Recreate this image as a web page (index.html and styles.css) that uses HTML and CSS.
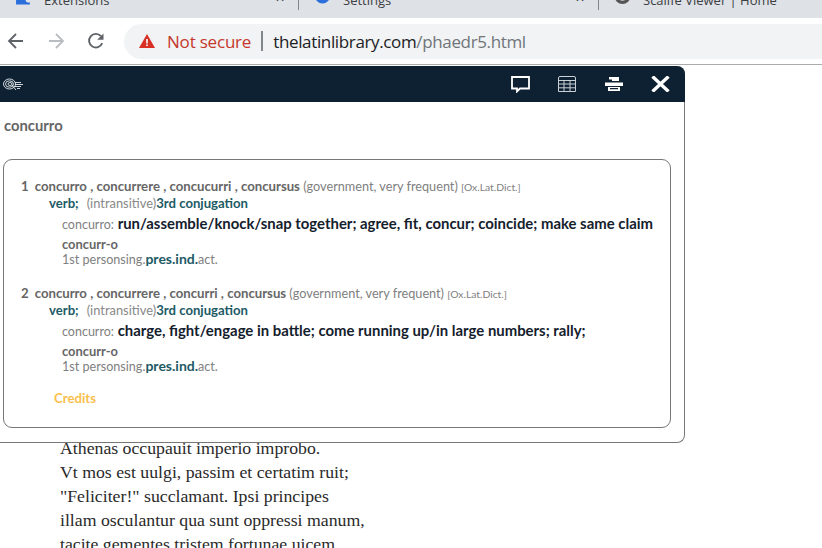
FILE: index.html
```html
<!DOCTYPE html>
<html lang="en">
<head>
<meta charset="utf-8">
<title>phaedr5</title>
<link rel="stylesheet" href="styles.css">
</head>
<body>
<div class="tabstrip">
  <div class="tab tab-a">
    <svg class="tabicon" viewBox="0 0 16 16"><path fill="#2a6fdc" d="M1 6h4V4a2 2 0 0 1 4 0v2h5v4h-2a2 2 0 0 0 0 4h2v2H1z"/></svg>
    <span class="tabtext">Extensions</span>
    <span class="tabclose">✕</span>
    <span class="tabsep"></span>
  </div>
  <div class="tab tab-b">
    <svg class="tabicon" viewBox="0 0 16 16"><circle cx="8" cy="8" r="7" fill="#2a6fdc"/></svg>
    <span class="tabtext">Settings</span>
    <span class="tabclose">✕</span>
    <span class="tabsep"></span>
  </div>
  <div class="tab tab-c">
    <svg class="tabicon" viewBox="0 0 16 16"><circle cx="8" cy="8" r="6" fill="none" stroke="#555" stroke-width="3"/></svg>
    <span class="tabtext">Scalife Viewer | Home</span>
  </div>
</div>
<div class="toolbar">
  <svg class="navicon" viewBox="0 0 20 20"><path fill="none" stroke="#5f6368" stroke-width="1.8" d="M17 10H3M10 3l-7 7 7 7"/></svg>
  <svg class="navicon dim" viewBox="0 0 20 20"><path fill="none" stroke="#b9bcc0" stroke-width="1.8" d="M3 10h14M10 3l7 7-7 7"/></svg>
  <svg class="navicon" viewBox="0 0 20 20"><path fill="none" stroke="#5f6368" stroke-width="1.9" d="M16.2 12.2A6.8 6.8 0 1 1 15 5.2"/><path fill="#5f6368" d="M17.5 2.5v6.3h-6.3z"/></svg>
  <div class="omnibox">
    <svg class="warn" viewBox="0 0 16 14"><path fill="#d93025" d="M8 0l8 14H0z"/><path fill="#fff" d="M7.2 5h1.6v4.5H7.2zM7.2 10.5h1.6V12H7.2z"/></svg>
    <span class="insecure">Not secure</span>
    <span class="sep"></span>
    <span class="host">thelatinlibrary.com</span><span class="path">/phaedr5.html</span>
  </div>
</div>
<main class="page">
  <div class="poem">
    <div>Athenas occupauit imperio improbo.</div>
    <div>Vt mos est uulgi, passim et certatim ruit;</div>
    <div>"Feliciter!" succlamant. Ipsi principes</div>
    <div>illam osculantur qua sunt oppressi manum,</div>
    <div>tacite gementes tristem fortunae uicem.</div>
  </div>
  <section class="popup">
    <header class="popup-head">
      <svg class="logo" viewBox="0 0 20 13"><g fill="none" stroke="#e8ecef" stroke-width=".9"><ellipse cx="6.500" cy="6" rx="6" ry="5"/><ellipse cx="6.500" cy="6" rx="4" ry="3.200"/><ellipse cx="7" cy="6" rx="2" ry="1.500"/><path d="M9 7l4 5M12 4.500h6M12 6.500h8M12 8.500h6M14 10.500h3"/></g></svg>
      <div class="tools">
        <svg class="tool-chat" viewBox="0 0 19 17"><path fill="none" stroke="#fff" stroke-width="1.800" d="M1 1h17v11.500H9l-3 3v-3H1z"/></svg>
        <svg class="tool-table" viewBox="0 0 18 16"><path fill="none" stroke="#c9d0d6" stroke-width="1" d="M.5 2a1.500 1.500 0 0 1 1.500-1.500h14a1.500 1.500 0 0 1 1.500 1.500v13.500H.5zM.5 4.500h17M.5 8h17M.5 11.800h17M6 4.500v11M12 4.500v11"/></svg>
        <svg class="tool-print" viewBox="0 0 18 14"><path fill="#fff" d="M4 0h10v4H4zM0 5.500h18V9H0zM3 10h12v4H3z"/><path fill="#0d2133" d="M4 2.500h3V4H4zM5 11h8v1.200H5z"/></svg>
        <svg class="tool-close" viewBox="0 0 19 16"><path fill="none" stroke="#fff" stroke-width="3.400" d="M1.500 0.500l16 15M17.500 0.500l-16 15"/></svg>
      </div>
    </header>
    <h1 class="lemma">concurro</h1>
    <div class="card">
      <article class="entry">
        <p class="forms"><b class="num">1</b><b>concurro , concurrere , concucurri , concursus</b> (government, very frequent) <small>[Ox.Lat.Dict.]</small></p>
        <p class="gram"><b>verb;</b><span class="gap">(intransitive)</span><b>3rd conjugation</b></p>
        <p class="sense">concurro: <b>run/assemble/knock/snap together; agree, fit, concur; coincide; make same claim</b></p>
        <p class="stem">concurr-o</p>
        <p class="morph">1st personsing.<b>pres.ind.</b>act.</p>
      </article>
      <article class="entry">
        <p class="forms"><b class="num">2</b><b>concurro , concurrere , concurri , concursus</b> (government, very frequent) <small>[Ox.Lat.Dict.]</small></p>
        <p class="gram"><b>verb;</b><span class="gap">(intransitive)</span><b>3rd conjugation</b></p>
        <p class="sense">concurro: <b>charge, fight/engage in battle; come running up/in large numbers; rally;</b></p>
        <p class="stem">concurr-o</p>
        <p class="morph">1st personsing.<b>pres.ind.</b>act.</p>
      </article>
      <a class="credits">Credits</a>
    </div>
  </section>
</main>
</body>
</html>
```
FILE: styles.css
```css
* { box-sizing: border-box; }
html, body { margin: 0; height: 100%; }
body {
  width: 822px;
  height: 548px;
  overflow: hidden;
  display: flex;
  flex-direction: column;
  background: #fff;
  font-family: "Open Sans", sans-serif;
}
.tabstrip {
  height: 18px;
  flex: none;
  background: #dee1e6;
  display: flex;
  overflow: hidden;
  font-size: 13px;
  color: #3c4043;
}
.tab {
  height: 18px;
  display: flex;
  align-items: flex-start;
}
.tab-a { width: 299px; padding-left: 15px; }
.tab-b { width: 300px; padding-left: 15px; }
.tab-c { flex: 1; padding-left: 15px; }
.tabicon { width: 17px; height: 18px; flex: none; margin-top: -13px; }
.tabtext { margin-left: 12px; line-height: 16px; margin-top: -8px; white-space: nowrap; }
.tabclose { margin-left: auto; margin-right: 13px; line-height: 12px; font-size: 12px; margin-top: -8px; }
.tabsep { width: 1px; height: 10px; background: #80868b; flex: none; }
.toolbar {
  height: 47px;
  flex: none;
  background: #fff;
  border-bottom: 1px solid #a9abad;
  display: flex;
  align-items: center;
  padding: 0 0 0 6px;
}
.navicon { width: 20px; height: 20px; flex: none; margin-right: 20px; }
.navicon:nth-child(3) { margin-right: 18px; }
.omnibox {
  flex: 1;
  height: 35px;
  background: #f1f3f4;
  border-radius: 18px 0 0 18px;
  display: flex;
  align-items: center;
  padding-left: 15px;
  font-size: 17px;
  white-space: nowrap;
}
.warn { width: 16px; height: 14px; flex: none; margin-right: 12px; }
.insecure { color: #c5372c; letter-spacing: -.2px; }
.sep { width: 2px; height: 20px; background: #80868b; margin: 0 10px 0 10px; }
.host { color: #202124; letter-spacing: -.36px; }
.path { color: #70757a; letter-spacing: -.36px; }

.page { position: relative; flex: 1; overflow: hidden; }
.poem {
  padding: 371px 0 0 60px;
  font-family: "Liberation Serif", serif;
  font-size: 17.750px;
  line-height: 24px;
  color: #2a2a2a;
  white-space: nowrap;
}
.popup {
  position: absolute;
  left: -10px;
  top: 1px;
  width: 695px;
  height: 377px;
  background: #fff;
  border: 1px solid #777;
  border-top: 0;
  border-radius: 8px;
  color: #707070;
  font-family: "Lato", sans-serif;
}
.popup-head {
  height: 36px;
  margin: 0 -1px;
  background: #0d2133;
  border-radius: 8px 8px 0 0;
  display: flex;
  align-items: center;
  justify-content: space-between;
}
.logo { width: 20px; height: 13px; margin-left: 13px; }
.tools { display: flex; align-items: center; }
.tool-chat { width: 19px; height: 17px; margin-right: 28px; }
.tool-table { width: 18px; height: 16px; margin-right: 29px; }
.tool-print { width: 18px; height: 14px; margin-right: 28px; }
.tool-close { width: 19px; height: 16px; margin-right: 15px; }
.lemma {
  margin: 14px 0 0 13px;
  font-size: 14.800px;
  line-height: 18px;
  font-weight: 700;
  color: #666;
}
.card {
  margin: 25px 0 0 12px;
  width: 668px;
  height: 269px;
  border: 1px solid #777;
  border-radius: 9px;
  padding: 19px 0 0 17px;
}
.entry { margin-bottom: 19px; }
.entry p { margin: 0; white-space: nowrap; }
.forms { font-size: 12.700px; line-height: 15px; color: #808080; }
.forms b { color: #666; font-weight: 700; font-size: 13.200px; }
.forms .num { margin-right: 6px; }
.forms small { font-size: 10.350px; }
.gram { font-size: 12.900px; line-height: 17px; margin-left: 28px !important; color: #888; }
.gram b { color: #1d5a66; font-weight: 700; font-size: 13.150px; }
.gap { margin-left: 8px; }
.sense { font-size: 12.500px; line-height: 18px; margin: 2px 0 0 41px !important; color: #808080; word-spacing: .5px; }
.sense b { color: #14202c; font-size: 14.900px; font-weight: 700; word-spacing: 0; }
.stem { font-size: 12.900px; line-height: 14px; margin: 3px 0 0 41px !important; font-weight: 700; color: #666; }
.morph { font-size: 12.600px; line-height: 15px; margin: 0 0 0 41px !important; color: #808080; }
.morph b { color: #1d5a66; font-weight: 700; font-size: 14px; }
.credits {
  display: block;
  margin: -3px 0 0 33px;
  font-size: 13.200px;
  line-height: 16px;
  font-weight: 700;
  color: #fbbf4d;
}
```
